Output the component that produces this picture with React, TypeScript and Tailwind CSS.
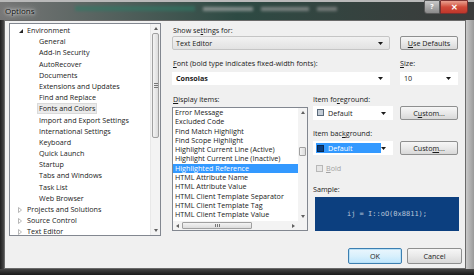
import React from 'react';

const font = "font-['Open_Sans','Noto_Sans',sans-serif]";

const treeChildren = [
  'General',
  'Add-in Security',
  'AutoRecover',
  'Documents',
  'Extensions and Updates',
  'Find and Replace',
  'Fonts and Colors',
  'Import and Export Settings',
  'International Settings',
  'Keyboard',
  'Quick Launch',
  'Startup',
  'Tabs and Windows',
  'Task List',
  'Web Browser',
];

const displayItems = [
  'Error Message',
  'Excluded Code',
  'Find Match Highlight',
  'Find Scope Highlight',
  'Highlight Current Line (Active)',
  'Highlight Current Line (Inactive)',
  'Highlighted Reference',
  'HTML Attribute Name',
  'HTML Attribute Value',
  'HTML Client Template Separator',
  'HTML Client Template Tag',
  'HTML Client Template Value',
];

const Arrow = () => (
  <svg width="5" height="3" viewBox="0 0 5 3" className="shrink-0">
    <path d="M0 0h5L2.5 3z" fill="#1a1a1a" />
  </svg>
);

const Combo = ({ children, className = '' }: { children: React.ReactNode; className?: string }) => (
  <div className={`flex items-center bg-white border border-[#c5c5c5] pr-[6px] ${className}`}>
    <div className="flex-1 flex items-center min-w-0">{children}</div>
    <Arrow />
  </div>
);

const WinButton = ({ children, className = '' }: { children: React.ReactNode; className?: string }) => (
  <div
    className={`flex items-center justify-center rounded-[2px] border border-[#8e8f8f] bg-gradient-to-b from-[#f6f6f6] via-[#e9e9e9] to-[#d8d8d8] text-[7.2px] text-[#1a1a1a] ${className}`}
  >
    {children}
  </div>
);

const ScrollArrowV = ({ up }: { up?: boolean }) => (
  <div className="h-[9px] flex items-center justify-center">
    <svg width="4" height="3" viewBox="0 0 4 3">
      <path d={up ? 'M0 3h4L2 0z' : 'M0 0h4L2 3z'} fill="#606060" />
    </svg>
  </div>
);

export default function App() {
  return (
    <div className={`w-[474px] h-[275px] overflow-hidden bg-[#2e2e2e] ${font}`}>
      {/* title bar */}
      <div className="h-[20px] flex items-start bg-gradient-to-r from-[#767676] via-[#2d4a43] to-[#3b3b3b] border-t-[2px] border-[#b9b9b9]">
        <div className="pl-[5px] pt-[3px] text-[8px] text-[#111] [text-shadow:0_0_6px_#fff,0_0_3px_#fff]">Options</div>
        <div className="flex-1 flex items-center gap-[8px] pl-[40px] pt-[4px] opacity-60 blur-[1.5px]">
          <div className="w-[120px] h-[5px] bg-[#2f7a66]" />
          <div className="w-[50px] h-[4px] bg-[#bcbcbc]" />
          <div className="w-[48px] h-[4px] bg-[#a8a8a8]" />
          <div className="w-[20px] h-[4px] bg-[#a0a0a0]" />
        </div>
        <div className="flex mr-[6px] -mt-[2px]">
          <div className="w-[16px] h-[14px] rounded-bl-[3px] border border-[#5a5a5a] bg-gradient-to-b from-[#c8c8c8] to-[#8a8a8a] flex items-center justify-center text-[7px] font-bold text-white">?</div>
          <div className="w-[28px] h-[14px] rounded-br-[3px] border border-[#7a3030] bg-gradient-to-b from-[#e8a090] via-[#d04a3a] to-[#c0362a] flex items-center justify-center text-[8px] font-bold text-white">✕</div>
        </div>
      </div>

      <div className="flex h-[249px]">
        <div className="w-[4px] bg-gradient-to-r from-[#1f1f1f] to-[#4a4a4a]" />
        {/* content */}
        <div className="w-[462px] bg-[#f0f0f0] border border-[#6a6a6a] flex flex-col text-[7.2px] text-[#1a1a1a]">
          <div className="flex pt-[2px]">
            {/* tree */}
            <div className="ml-[4px] w-[152px] h-[213px] bg-white border border-[#828790] flex">
              <div className="flex-1 pt-[1px] leading-[11.2px] overflow-hidden">
                <div className="flex items-center h-[11.2px] pl-[9px]">
                  <svg width="4" height="4" viewBox="0 0 4 4" className="mr-[4px]">
                    <path d="M4 0v4H0z" fill="#262626" />
                  </svg>
                  Environment
                </div>
                {treeChildren.map((t) => (
                  <div key={t} className="h-[11.2px] pl-[29px] flex items-center">
                    <span className={t === 'Fonts and Colors' ? 'bg-[#ebebeb] border border-[#dadada] px-[1px] -mx-[2px] leading-[9px]' : ''}>{t}</span>
                  </div>
                ))}
                {['Projects and Solutions', 'Source Control', 'Text Editor'].map((t) => (
                  <div key={t} className="flex items-center h-[11.2px] pl-[8px]">
                    <svg width="4" height="6" viewBox="0 0 4 6" className="mr-[5px]">
                      <path d="M0.5 0.5v5L3.5 3z" fill="none" stroke="#a6a6a6" strokeWidth="0.8" />
                    </svg>
                    {t}
                  </div>
                ))}
              </div>
              <div className="w-[10px] bg-[#f3f3f3] border-l border-[#e8e8e8] flex flex-col">
                <ScrollArrowV up />
                <div className="mx-[1px] h-[105px] rounded-[2px] border border-[#a0a0a0] bg-gradient-to-r from-[#f4f4f4] to-[#dcdcdc] flex items-center justify-center">
                  <div className="flex flex-col gap-[1px]">
                    <div className="w-[4px] h-px bg-[#777]" />
                    <div className="w-[4px] h-px bg-[#777]" />
                    <div className="w-[4px] h-px bg-[#777]" />
                  </div>
                </div>
                <div className="flex-1" />
                <ScrollArrowV />
              </div>
            </div>

            {/* right column */}
            <div className="ml-[11px] w-[287px] flex flex-col">
              <div className="h-[12px] mt-[1px] flex items-center pl-[1px]">
                Show se<u>t</u>tings for:
              </div>
              <div className="flex mt-[0px] h-[14px]">
                <Combo className="w-[218px] pl-[3px] bg-gradient-to-b from-[#f2f2f2] to-[#e2e2e2] border-[#a8a8a8] rounded-[2px]">Text Editor</Combo>
                <WinButton className="ml-[10px] w-[58px]"><span><u>U</u>se Defaults</span></WinButton>
              </div>
              <div className="flex mt-[8px] h-[11px] items-center">
                <div className="w-[228px] pl-[1px]">
                  <u>F</u>ont (bold type indicates fixed-width fonts):
                </div>
                <div><u>S</u>ize:</div>
              </div>
              <div className="flex mt-[3px] h-[13px]">
                <Combo className="w-[218px] pl-[3px] font-bold border-transparent">Consolas</Combo>
                <Combo className="ml-[10px] w-[58px] pl-[3px] border-transparent">10</Combo>
              </div>

              <div className="flex mt-[9px]">
                {/* display items */}
                <div className="w-[136px] flex flex-col">
                  <div className="h-[11px] flex items-center pl-[1px]">
                    <u>D</u>isplay items:
                  </div>
                  <div className="mt-[2px] h-[124px] bg-white border border-[#828790] flex flex-col">
                    <div className="flex flex-1 min-h-0">
                      <div className="flex-1 pt-[0px] overflow-hidden">
                        {displayItems.map((t) => (
                          <div
                            key={t}
                            className={`h-[9.3px] leading-[9.3px] pl-[2px] whitespace-nowrap ${t === 'Highlighted Reference' ? 'bg-[#3399ff] text-white' : ''}`}
                          >
                            {t}
                          </div>
                        ))}
                      </div>
                      <div className="w-[9px] bg-[#f3f3f3] flex flex-col">
                        <ScrollArrowV up />
                        <div className="h-[30px]" />
                        <div className="mx-[1px] h-[9px] rounded-[1px] border border-[#a0a0a0] bg-gradient-to-r from-[#f4f4f4] to-[#dcdcdc]" />
                        <div className="flex-1" />
                        <ScrollArrowV />
                      </div>
                    </div>
                    <div className="h-[9px] bg-[#f3f3f3] flex items-center pr-[9px]">
                      <div className="w-[9px] flex justify-center">
                        <svg width="3" height="4" viewBox="0 0 3 4"><path d="M3 0v4L0 2z" fill="#606060" /></svg>
                      </div>
                      <div className="w-[70px] h-[7px] rounded-[1px] border border-[#a0a0a0] bg-gradient-to-b from-[#f4f4f4] to-[#dcdcdc] flex items-center justify-center">
                        <div className="flex gap-[1px]">
                          <div className="w-px h-[3px] bg-[#777]" />
                          <div className="w-px h-[3px] bg-[#777]" />
                          <div className="w-px h-[3px] bg-[#777]" />
                        </div>
                      </div>
                      <div className="flex-1" />
                      <div className="w-[9px] flex justify-center">
                        <svg width="3" height="4" viewBox="0 0 3 4"><path d="M0 0v4L3 2z" fill="#606060" /></svg>
                      </div>
                    </div>
                  </div>
                </div>

                {/* item colors */}
                <div className="ml-[5px] flex-1 flex flex-col">
                  <div className="h-[11px] flex items-center">
                    Item fo<u>r</u>eground:
                  </div>
                  <div className="flex mt-[1px] h-[14px]">
                    <Combo className="w-[80px] pl-[3px] border-transparent">
                      <div className="w-[7px] h-[7px] bg-[#c3ccd6] border border-[#5a6a7a] mr-[4px]" />
                      Default
                    </Combo>
                    <WinButton className="ml-[7px] w-[58px]"><span>C<u>u</u>stom...</span></WinButton>
                  </div>
                  <div className="h-[11px] mt-[8px] flex items-center">
                    Item bac<u>k</u>ground:
                  </div>
                  <div className="flex mt-[2px] h-[14px]">
                    <Combo className="w-[80px] pl-[2px] border-transparent">
                      <div className="w-[66px] h-[10px] bg-[#3399ff] flex items-center pl-[1px] text-white">
                        <div className="w-[7px] h-[7px] bg-[#0b3e7e] border border-[#0a2850] mr-[4px]" />
                        Default
                      </div>
                    </Combo>
                    <WinButton className="ml-[7px] w-[58px]"><span>Custo<u>m</u>...</span></WinButton>
                  </div>
                  <div className="flex items-center mt-[8px] h-[11px] pl-[3px] text-[#a3a3a3]">
                    <div className="w-[7px] h-[7px] border border-[#b8b8b8] bg-[#e6e6e6] mr-[3px]" />
                    <span><u>B</u>old</span>
                  </div>
                  <div className="h-[11px] mt-[10px] flex items-center">Sample:</div>
                  <div className="mt-[2px] ml-[2px] w-[144px] h-[34px] bg-[#0c3f7f] flex items-center justify-center font-['DejaVu_Sans_Mono',monospace] text-[7px] text-[#b9c6d8]">
                    ij = I::oO(0x8811);
                  </div>
                </div>
              </div>
            </div>
          </div>

          {/* bottom buttons */}
          <div className="flex justify-end mt-[12px] pr-[3px] gap-[5px]">
            <div className="w-[54px] h-[16px] rounded-[2px] border border-[#3c7fb1] bg-gradient-to-b from-[#eaf6fd] via-[#d9f0fc] to-[#bee6fd] flex items-center justify-center text-[7.2px] shadow-[inset_0_0_0_1px_#b8e0f6]">
              OK
            </div>
            <WinButton className="w-[55px] h-[16px]">Cancel</WinButton>
          </div>
        </div>
        <div className="w-[8px] bg-gradient-to-r from-[#c9c9c9] to-[#9a9a9a]" />
      </div>
      <div className="h-[6px] bg-gradient-to-b from-[#444] to-[#1a1a1a]" />
    </div>
  );
}
